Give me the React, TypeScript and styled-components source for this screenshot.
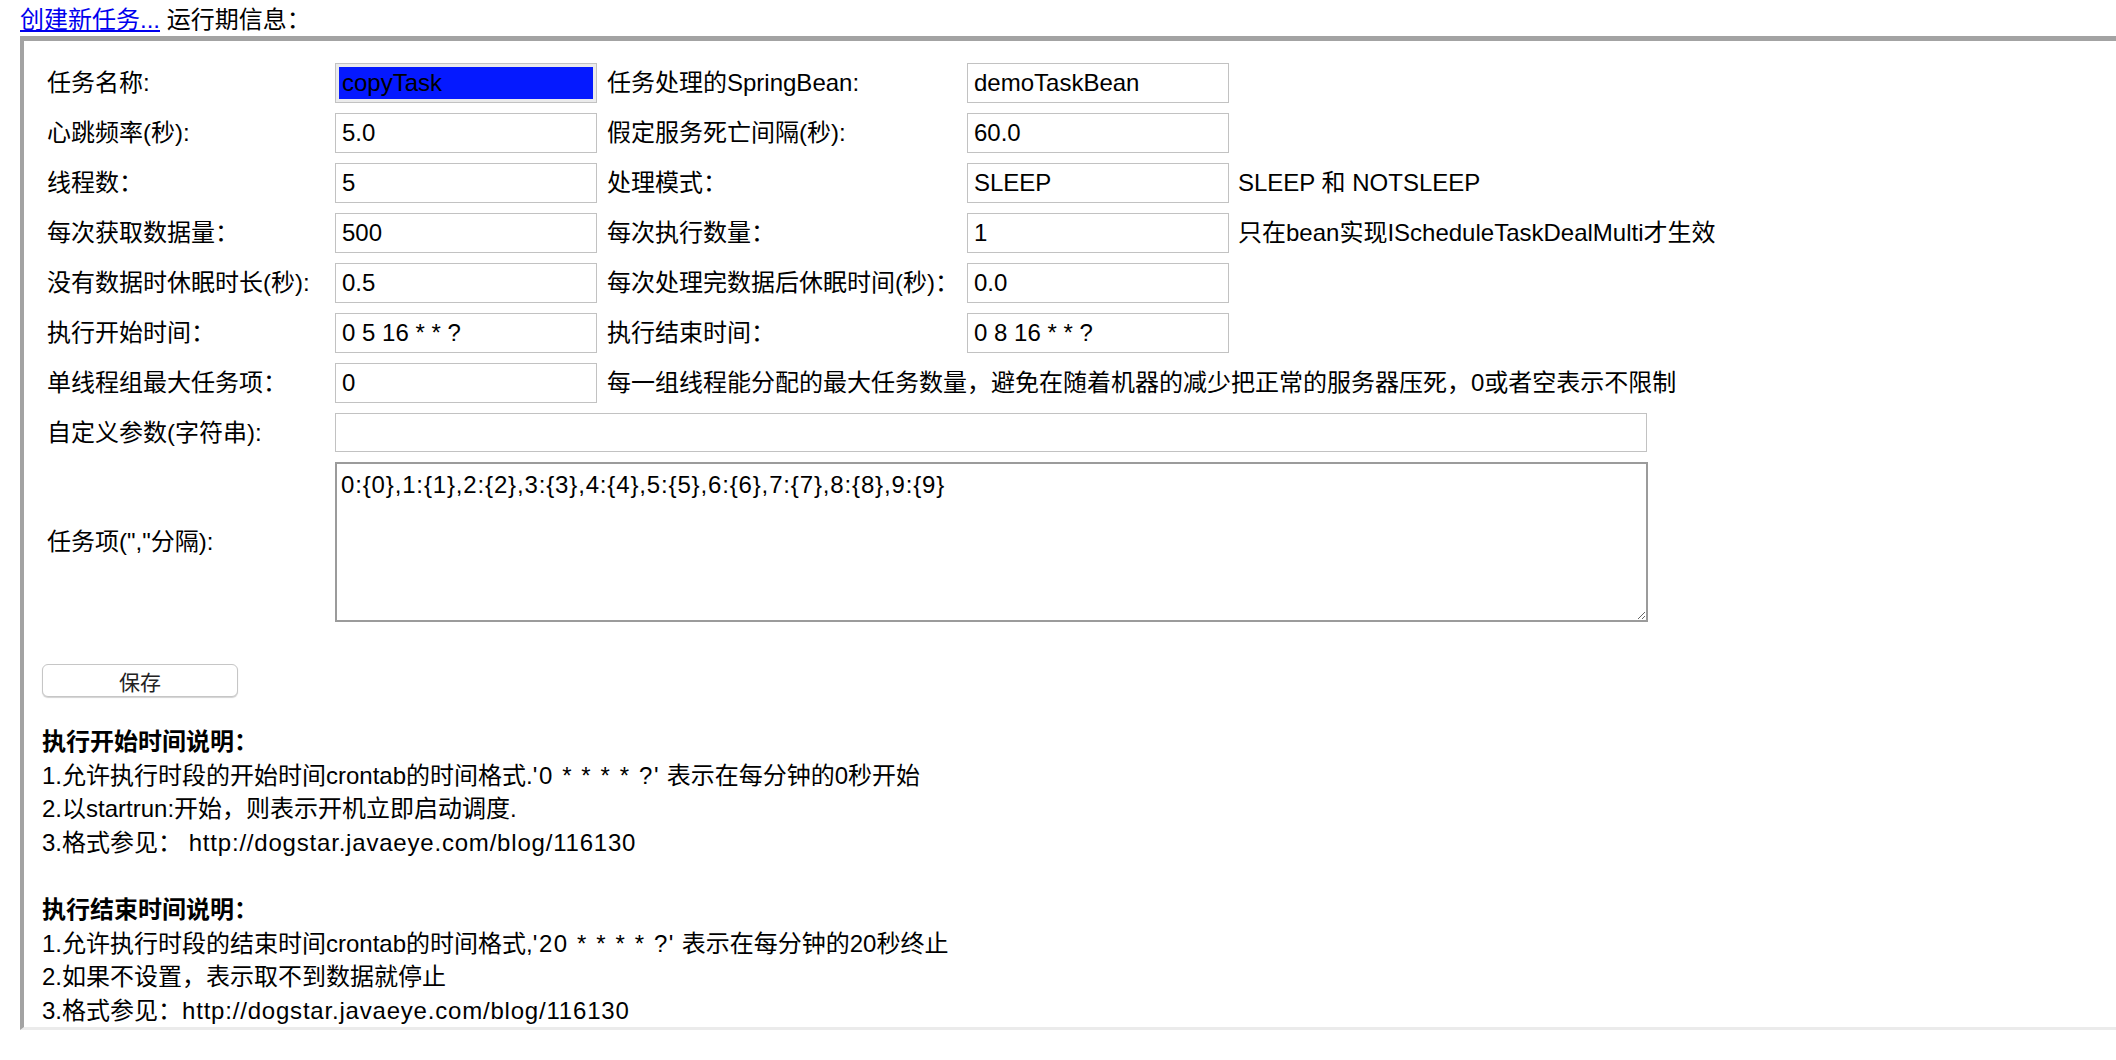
import React from "react";
import styled, { createGlobalStyle } from "styled-components";

const GlobalStyle = createGlobalStyle`
  html, body {
    margin: 0;
    padding: 0;
    background: #fff;
  }
`;

const fields = [
  { label: "任务名称:", value: "copyTask", focused: true, label2: "任务处理的SpringBean:", value2: "demoTaskBean", hint: "" },
  { label: "心跳频率(秒):", value: "5.0", label2: "假定服务死亡间隔(秒):", value2: "60.0", hint: "" },
  { label: "线程数：", value: "5", label2: "处理模式：", value2: "SLEEP", hint: "SLEEP 和 NOTSLEEP" },
  { label: "每次获取数据量：", value: "500", label2: "每次执行数量：", value2: "1", hint: "只在bean实现IScheduleTaskDealMulti才生效" },
  { label: "没有数据时休眠时长(秒):", value: "0.5", label2: "每次处理完数据后休眠时间(秒)：", value2: "0.0", hint: "" },
  { label: "执行开始时间：", value: "0 5 16 * * ?", label2: "执行结束时间：", value2: "0 8 16 * * ?", hint: "" },
];

const URL = "http://dogstar.javaeye.com/blog/116130";

function App() {
  return (
    <Page>
      <GlobalStyle />
      <Header>
        <a href="#">创建新任务...</a> 运行期信息：
      </Header>
      <Frame>
        <FormGrid>
          {fields.map((f) => (
            <React.Fragment key={f.label}>
              <Label>{f.label}</Label>
              <Field defaultValue={f.value} $focused={f.focused} />
              <Label>{f.label2}</Label>
              <Field defaultValue={f.value2} />
              <Hint>{f.hint}</Hint>
            </React.Fragment>
          ))}
          <Label>单线程组最大任务项：</Label>
          <Field defaultValue="0" />
          <Hint $wide>每一组线程能分配的最大任务数量，避免在随着机器的减少把正常的服务器压死，0或者空表示不限制</Hint>
          <Label>自定义参数(字符串):</Label>
          <Field defaultValue="" $wide />
          <Label>{'任务项(","分隔):'}</Label>
          <TaskItems defaultValue="0:{0},1:{1},2:{2},3:{3},4:{4},5:{5},6:{6},7:{7},8:{8},9:{9}" />
        </FormGrid>
        <SaveButton type="button">保存</SaveButton>
        <Notes>
          <NoteTitle>执行开始时间说明：</NoteTitle>
          <NoteLine>
            1.允许执行时段的开始时间crontab的时间格式.<Loose $spacing={1.6}>'0 * * * * ?'</Loose> 表示在每分钟的0秒开始
          </NoteLine>
          <NoteLine>2.以startrun:开始，则表示开机立即启动调度.</NoteLine>
          <NoteLine>
            3.格式参见： <Loose $spacing={0.8}>{URL}</Loose>
          </NoteLine>
          <NoteGap />
          <NoteTitle>执行结束时间说明：</NoteTitle>
          <NoteLine>
            1.允许执行时段的结束时间crontab的时间格式,<Loose $spacing={1.6}>'20 * * * * ?'</Loose> 表示在每分钟的20秒终止
          </NoteLine>
          <NoteLine>2.如果不设置，表示取不到数据就停止</NoteLine>
          <NoteLine>
            3.格式参见：<Loose $spacing={0.8}>{URL}</Loose>
          </NoteLine>
        </Notes>
      </Frame>
    </Page>
  );
}

const Page = styled.div`
  width: 100vw;
  height: 100vh;
  overflow: hidden;
  font-family: "Liberation Sans", "Noto Sans CJK SC", sans-serif;
  font-size: 24px;
  line-height: 1.4;
  color: #000;
`;

const Header = styled.div`
  box-sizing: border-box;
  height: 36px;
  padding: 3px 0 0 20px;
  line-height: 33px;
  white-space: nowrap;

  a {
    color: #0000ee;
    text-decoration: underline;
  }
`;

const Frame = styled.div`
  box-sizing: border-box;
  margin-left: 20px;
  width: 2200px;
  height: 994px;
  overflow: hidden;
  border-top: 5px solid #a3a3a3;
  border-left: 4px solid #a3a3a3;
  border-bottom: 3px solid #ebebeb;
  border-right: 3px solid #ebebeb;
  padding: 22px 0 0 18px;
`;

const FormGrid = styled.div`
  display: grid;
  grid-template-columns: 288px 272px 360px 271px auto;
  row-gap: 10px;
  align-items: center;
  margin-left: 5px;
`;

const Label = styled.div`
  white-space: nowrap;
`;

const Hint = styled.div<{ $wide?: boolean }>`
  white-space: nowrap;
  grid-column: ${(p) => (p.$wide ? "3 / -1" : "auto")};
`;

const Field = styled.input<{ $focused?: boolean; $wide?: boolean }>`
  box-sizing: border-box;
  width: ${(p) => (p.$wide ? "1312px" : "262px")};
  height: ${(p) => (p.$wide ? "39px" : "40px")};
  grid-column: ${(p) => (p.$wide ? "2 / -1" : "auto")};
  margin: 0;
  padding: 0 6px;
  border: 1px solid #c2c2c2;
  border-radius: 0;
  outline: none;
  font: inherit;
  color: #000;
  background: ${(p) => (p.$focused ? "#0519ff" : "#fff")};
  box-shadow: ${(p) => (p.$focused ? "inset 0 0 0 3px #ebebeb" : "none")};
`;

const TaskItems = styled.textarea`
  box-sizing: border-box;
  grid-column: 2 / -1;
  width: 1313px;
  height: 160px;
  margin: 0;
  padding: 4px;
  border: 2px solid #9b9b9b;
  border-radius: 0;
  outline: none;
  font: inherit;
  line-height: 1.4;
  letter-spacing: 0.85px;
  color: #000;
  background: #fff;
`;

const SaveButton = styled.button`
  display: block;
  box-sizing: border-box;
  margin-top: 42px;
  width: 196px;
  height: 33px;
  border: 1px solid #c6c6c6;
  border-radius: 6px;
  background: #fff;
  box-shadow: 0 1px 1px rgba(0, 0, 0, 0.18);
  font-family: inherit;
  font-size: 21px;
  color: #222;
  padding: 0;
`;

const Notes = styled.div`
  margin-top: 28px;
  line-height: 33.6px;
  white-space: nowrap;
`;

const NoteTitle = styled.div`
  font-weight: bold;
`;

const NoteLine = styled.div``;

const Loose = styled.span<{ $spacing: number }>`
  letter-spacing: ${(p) => p.$spacing}px;
`;

const NoteGap = styled.div`
  height: 33.6px;
`;

export default App;
